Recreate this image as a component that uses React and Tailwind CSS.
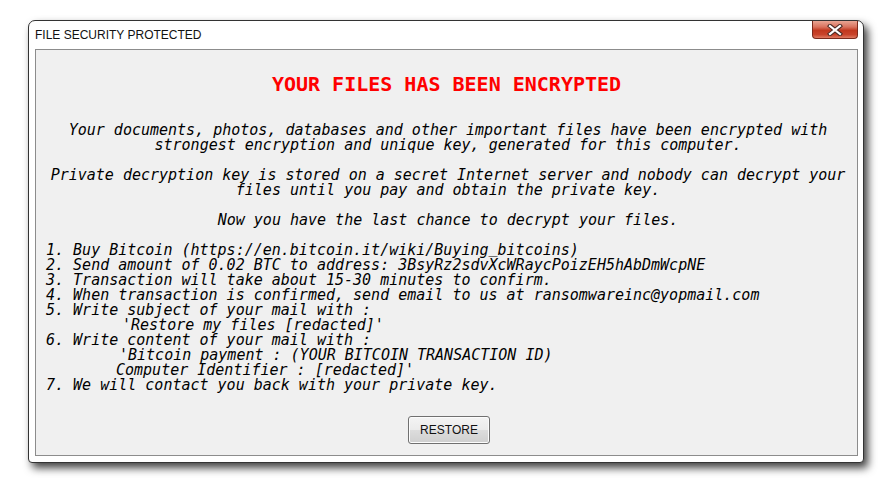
import React from 'react';

const mono = { fontFamily: '"DejaVu Sans Mono", "Liberation Mono", monospace' };

function CloseButton() {
  return (
    <div className="absolute right-[5px] top-0 w-[46px] h-[18px] rounded-b-[4px] border border-t-0 border-[#7a2a1c] bg-[linear-gradient(#e9a593_0%,#d9735e_35%,#c1381f_55%,#c9442b_80%,#df7a62_100%)] flex items-center justify-center">
      <svg width="16" height="12" viewBox="0 0 16 12">
        <path d="M3 2 L13 10 M13 2 L3 10" stroke="#4a2a24" strokeWidth="4.2" strokeLinecap="square" />
        <path d="M3 2 L13 10 M13 2 L3 10" stroke="#ffffff" strokeWidth="2.2" strokeLinecap="square" />
      </svg>
    </div>
  );
}

export default function App() {
  return (
    <div className="w-[893px] h-[493px] bg-white pt-[20px] pl-[28px] overflow-hidden">
      {/* window frame */}
      <div className="w-[836px] h-[443px] flex flex-col bg-white border border-[#333] rounded-t-[7px] rounded-b-[4px] shadow-[4px_5px_9px_rgba(0,0,0,0.75)]">
        <div className="relative h-[28px] shrink-0">
          <div className="pl-[6px] pt-[6px] text-[12px] leading-[16px] text-[#111]" style={{ fontFamily: '"Liberation Sans", Arial, sans-serif' }}>
            FILE SECURITY PROTECTED
          </div>
          <CloseButton />
        </div>

        {/* content panel */}
        <div className="ml-[6px] mr-[5px] mb-[6px] flex-1 flex flex-col border border-[#8c8c8c] bg-[#f0f0f0]">
          <div className="pt-[22px] text-center text-[20px] leading-[24px] font-bold text-[#ff0000]" style={mono}>
            YOUR FILES HAS BEEN ENCRYPTED
          </div>

          <div className="mt-[27px] text-[15px] leading-[15px] italic text-black whitespace-nowrap" style={mono}>
            <div className="text-center pl-[3px]">
              <div>Your documents, photos, databases and other important files have been encrypted with</div>
              <div>strongest encryption and unique key, generated for this computer.</div>
            </div>
            <div className="text-center pl-[3px] mt-[15px]">
              <div>Private decryption key is stored on a secret Internet server and nobody can decrypt your</div>
              <div>files until you pay and obtain the private key.</div>
            </div>
            <div className="text-center pl-[3px] mt-[15px]">
              Now you have the last chance to decrypt your files.
            </div>
            <div className="mt-[15px] pl-[10px]">
              <div>1. Buy Bitcoin (https://en.bitcoin.it/wiki/Buying<span className="relative -top-[2px]">_</span>bitcoins)</div>
              <div>2. Send amount of 0.02 BTC to address: 3BsyRz2sdvXcWRaycPoizEH5hAbDmWcpNE</div>
              <div>3. Transaction will take about 15-30 minutes to confirm.</div>
              <div>4. When transaction is confirmed, send email to us at ransomwareinc@yopmail.com</div>
              <div>5. Write subject of your mail with :</div>
              <div className="pl-[76px]">'Restore my files [redacted]'</div>
              <div>6. Write content of your mail with :</div>
              <div className="pl-[73px]">'Bitcoin payment : (YOUR BITCOIN TRANSACTION ID)</div>
              <div className="pl-[70px]">Computer Identifier : [redacted]'</div>
              <div>7. We will contact you back with your private key.</div>
            </div>
          </div>

          <button
            className="mt-[23px] ml-[372px] w-[82px] h-[28px] rounded-[3px] border border-[#707070] bg-[linear-gradient(#f4f4f4_0%,#ebebeb_50%,#dddddd_50%,#cfcfcf_100%)] text-[12px] text-[#111] shadow-[inset_0_0_0_1px_#fcfcfc]"
            style={{ fontFamily: '"Liberation Sans", Arial, sans-serif' }}
          >
            RESTORE
          </button>
        </div>
      </div>
    </div>
  );
}
